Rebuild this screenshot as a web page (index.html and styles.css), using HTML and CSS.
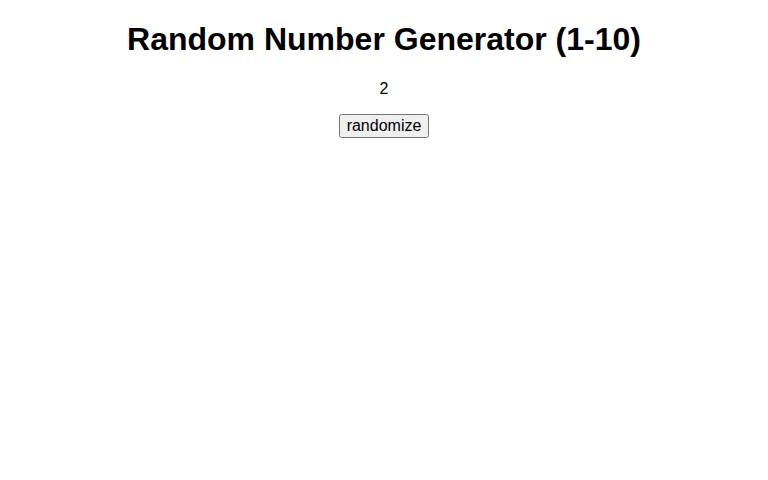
FILE: index.html
```html
<!DOCTYPE html>
<html>
<head>
<meta charset="utf-8">
<title>Random Number Generator</title>
<link rel="stylesheet" href="styles.css">
</head>
<body>
<div class="app">
  <h1 class="title">Random Number Generator (1-10)</h1>
  <p class="number">2</p>
  <button class="btn">randomize</button>
</div>
</body>
</html>
```
FILE: styles.css
```css
body {
  margin: 0;
  font-family: "Liberation Sans", Arial, sans-serif;
  background: #fff;
  color: #000;
}
.app {
  text-align: center;
}
.title {
  font-size: 32px;
  font-weight: bold;
  margin: 21.44px 0;
}
.number {
  font-size: 16px;
  margin: 16px 0;
}
.btn {
  font-family: "Liberation Sans", Arial, sans-serif;
  font-size: 16px;
}
```
